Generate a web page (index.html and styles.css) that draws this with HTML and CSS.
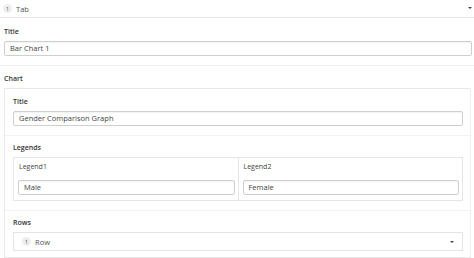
FILE: index.html
```html
<!DOCTYPE html>
<html>
<head>
<meta charset="utf-8">
<link rel="stylesheet" href="styles.css">
</head>
<body>
<div class="page">
  <div class="tab-header">
    <span class="badge">1</span>
    <span class="tab-name">Tab</span>
    <span class="caret"></span>
  </div>
  <div class="section top-section">
    <div class="label">Title</div>
    <div class="input wide">Bar Chart 1</div>
  </div>
  <div class="section chart-section">
    <div class="label">Chart</div>
    <div class="panel">
      <div class="sub">
        <div class="label">Title</div>
        <div class="input">Gender Comparison Graph</div>
      </div>
      <div class="sub">
        <div class="label">Legends</div>
        <div class="legends">
          <div class="legend-col">
            <div class="legend-head">Legend1</div>
            <div class="legend-body"><div class="input">Male</div></div>
          </div>
          <div class="legend-col">
            <div class="legend-head">Legend2</div>
            <div class="legend-body"><div class="input">Female</div></div>
          </div>
        </div>
      </div>
      <div class="sub">
        <div class="label">Rows</div>
        <div class="row-box">
          <span class="badge">1</span>
          <span class="row-name">Row</span>
          <span class="caret"></span>
        </div>
      </div>
    </div>
  </div>
</div>
</body>
</html>
```
FILE: styles.css
```css
html, body {
  margin: 0;
  padding: 0;
  background: #fff;
}
body {
  font-family: "Open Sans", "Noto Sans", sans-serif;
  font-size: 7.5px;
  color: #333;
  width: 474px;
  height: 258px;
  overflow: hidden;
}
.page {
  display: flex;
  flex-direction: column;
}
.tab-header {
  height: 17px;
  border-bottom: 1px solid #e8e8e8;
  display: flex;
  align-items: center;
  padding-left: 3px;
  padding-right: 2px;
}
.badge {
  width: 9px;
  height: 9px;
  border-radius: 50%;
  background: #eee;
  color: #666;
  font-size: 6px;
  display: flex;
  align-items: center;
  justify-content: center;
  line-height: 1;
}
.tab-name, .row-name {
  margin-left: 4px;
  color: #555;
}
.caret {
  margin-left: auto;
  width: 0;
  height: 0;
  border-left: 2px solid transparent;
  border-right: 2px solid transparent;
  border-top: 2px solid #444;
}
.tab-header .caret {
  margin-top: -2px;
}
.section {
  padding-left: 4px;
}
.top-section {
  padding-top: 8px;
  padding-bottom: 9px;
  border-bottom: 1px solid #f0f0f0;
}
.label {
  font-weight: 600;
  color: #333;
  height: 15px;
  line-height: 12px;
  font-size: 7px;
}
.input {
  height: 13px;
  border: 1px solid #cfcfcf;
  border-radius: 2px;
  line-height: 13px;
  padding-left: 5px;
  color: #444;
  box-shadow: inset 0 1px 1px rgba(0,0,0,0.05);
}
.wide {
  margin-right: 2px;
}
.chart-section {
  padding-top: 7px;
}
.panel {
  border: 1px solid #e8e8e8;
  border-right-color: #f0f0f0;
  margin-right: 3px;
  padding: 4px 7px 0 7px;
}
.sub {
  padding-top: 3px;
  padding-bottom: 9px;
  border-bottom: 1px solid #f2f2f2;
  margin-left: -7px;
  margin-right: -7px;
  padding-left: 8px;
  padding-right: 7px;
}
.sub + .sub {
  padding-top: 6px;
}
.sub:last-child {
  border-bottom: none;
  padding-bottom: 6px;
}
.legends {
  display: flex;
  border: 1px solid #e6e6e6;
  height: 42px;
}
.legend-col {
  flex: 1;
  display: flex;
  flex-direction: column;
}
.legend-col + .legend-col {
  border-left: 1px solid #e6e6e6;
}
.legend-head {
  height: 18px;
  line-height: 18px;
  padding-left: 5px;
  font-size: 7px;
  color: #444;
}
.legend-body {
  padding: 4px 3px 0 4px;
}
.row-box {
  height: 17px;
  border: 1px solid #e4e4e4;
  display: flex;
  align-items: center;
  padding-left: 8px;
  padding-right: 8px;
}
```
